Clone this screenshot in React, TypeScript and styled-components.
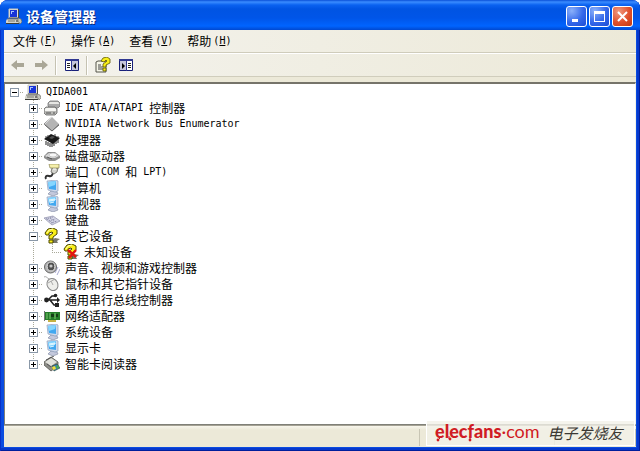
import React, { useState } from 'react';
import styled, { createGlobalStyle, css } from 'styled-components';

const GlobalStyle = createGlobalStyle`
  * { box-sizing: border-box; }
  html { background: #fff; }
  body {
    margin: 0;
    color: #000;
    font: 12px/16px "Noto Sans CJK SC", sans-serif;
  }
  button { margin: 0; padding: 0; border: 0; background: none; color: inherit; font: inherit; }
`;

const Frame = styled.div`
  position: relative;
  display: flex;
  flex-direction: column;
  min-height: 100vh;
  padding: 0 4px 4px;
  overflow: hidden;
  border-radius: 8px 8px 0 0;
  background: #0a4ce0;
  box-shadow: inset 1px 0 #0830c8, inset -1px -1px #001e9c, inset -3px -3px #0638cc;
`;

const TitleBar = styled.header`
  display: flex;
  align-items: center;
  height: 30px;
  margin: 0 -4px;
  padding: 2px 7px 0 6px;
  gap: 4px;
  background: linear-gradient(#0a50d8 0, #3a8cff 2px, #0a62f0 5px, #0054e3 9px, #0055e8 18px, #0064ff 26px, #0048d0 30px);
`;

const Title = styled.h1`
  flex: 1;
  margin: 0;
  color: #fff;
  font: bold 14px/20px "Noto Sans CJK SC", sans-serif;
  text-shadow: 1px 1px #0a2a80;
`;

const Captions = styled.div`
  display: flex;
  gap: 2px;
`;

const CaptionButton = styled.button<{ $close?: boolean }>`
  display: grid;
  place-items: center;
  width: 21px;
  height: 21px;
  border: 1px solid #fff;
  border-radius: 3px;
  background: ${(p) =>
    p.$close
      ? 'radial-gradient(circle at 30% 25%, #f09a80, #e0502c 55%, #c03810)'
      : 'radial-gradient(circle at 25% 20%, #8ab0fa, #3468ea 55%, #1c4cd4)'};
`;

const MenuBar = styled.nav`
  display: flex;
  align-items: center;
  height: 23px;
  padding-left: 9px;
  gap: 14px;
  border-bottom: 1px solid #cfccbb;
  background: linear-gradient(90deg, #f4f3ee, #ece9d8);
`;

const MenuButton = styled.button`
  display: flex;
  gap: 2px;
  line-height: 20px;
`;

const Toolbar = styled.div`
  display: flex;
  align-items: center;
  height: 24px;
  padding-left: 2px;
  border-top: 1px solid #fff;
  border-bottom: 1px solid #d0cdbc;
  background: linear-gradient(90deg, #f4f3ee, #ece9d8);
`;

const ToolButton = styled.button`
  display: grid;
  place-items: center;
  width: 23px;
  height: 20px;
`;

const Divider = styled.span`
  width: 2px;
  height: 19px;
  margin: 0 3px;
  border-left: 1px solid #c5c2b2;
  border-right: 1px solid #fff;
`;

const Client = styled.main`
  display: flex;
  flex: 1;
  flex-direction: column;
  padding-top: 5px;
  background: #ece9d8;
`;

const TreeList = styled.ul`
  flex: 1;
  margin: 0;
  padding: 0;
  list-style: none;
  border: 1px solid #808078;
  border-top: 2px solid #76746a;
  border-right-color: #f4f2e8;
  background: #fff;
`;

const Group = styled.ul`
  margin: 0;
  padding: 0;
  list-style: none;
`;

const Row = styled.div`
  display: flex;
  align-items: center;
  height: 16px;
  white-space: nowrap;
`;

type LineKind = 'none' | 'root' | 'through' | 'end' | 'pass';

const dotsDown = 'repeating-linear-gradient(#a8a898 0 1px, transparent 1px 2px)';
const dotsAcross = 'repeating-linear-gradient(90deg, #a8a898 0 1px, transparent 1px 2px)';

const lineStyles = {
  none: css``,
  root: css`
    background: ${dotsAcross} 9px 8px / 10px 1px no-repeat;
  `,
  through: css`
    background: ${dotsDown} 9px 0 / 1px 100% no-repeat, ${dotsAcross} 9px 8px / 10px 1px no-repeat;
  `,
  end: css`
    background: ${dotsDown} 9px 0 / 1px 8px no-repeat, ${dotsAcross} 9px 8px / 10px 1px no-repeat;
  `,
  pass: css`
    background: ${dotsDown} 9px 0 / 1px 100% no-repeat;
  `,
};

const Cell = styled.span<{ $line: LineKind }>`
  display: grid;
  flex: none;
  place-items: center;
  width: 19px;
  height: 16px;
  ${(p) => lineStyles[p.$line]}
`;

const Expander = styled.button<{ $open: boolean }>`
  width: 9px;
  height: 9px;
  border: 1px solid #8a98a8;
  background:
    linear-gradient(#000, #000) center / 5px 1px no-repeat,
    linear-gradient(#000, #000) center / 1px ${(p) => (p.$open ? '1px' : '5px')} no-repeat,
    #fff;
`;

const Label = styled.span`
  display: flex;
  align-items: center;
  height: 16px;
  padding-left: 5px;
  white-space: pre;
`;

const Latin = styled.span`
  font-family: "DejaVu Sans Mono", monospace;
  font-size: 10px;
`;

const StatusBar = styled.footer`
  display: flex;
  height: 22px;
  padding: 3px 0 1px;
  border-top: 1px solid #a5a294;
  background: linear-gradient(#f8f6ec, #ece9d8 4px);
`;

const StatusPane = styled.span<{ $grow: number }>`
  flex: ${(p) => p.$grow};
  border-right: 1px solid #c8c5b4;
`;

const Watermark = styled.div`
  position: absolute;
  right: 5px;
  bottom: 5px;
  display: flex;
  align-items: center;
  width: 209px;
  height: 26px;
  padding: 0 8px 5px;
  gap: 8px;
  border: 1px solid #fff;
  background: #f3f1e8cc;
`;

const Brand = styled.span`
  position: relative;
  display: flex;
  color: #d01c24;
  font: 18px/20px Lato, sans-serif;
`;

const BrandStrong = styled.b`
  font-weight: 900;
`;

const BrandRoots = styled.svg`
  position: absolute;
  top: 14px;
  left: 0;
`;

const BrandName = styled.span`
  padding-top: 4px;
  color: #3c3934;
  font: italic 15px/18px "Noto Sans CJK SC", sans-serif;
`;

const Svg = styled.svg`
  display: block;
  flex: none;
`;

const TreeIcon = styled.span`
  flex: none;
  padding-left: 1px;
`;

function Art({ children }: { children: React.ReactNode }) {
  return (
    <Svg width="16" height="16" viewBox="0 0 16 16" aria-hidden="true">
      {children}
    </Svg>
  );
}

const question = (
  <>
    <path d="M8 12l3-2 5 1-3 2 1 2H9z" fill="#77776c" />
    <path d="M1 5l3-4 5-1 4 2v4L9 9v2H5V8l4-3-1-1-3 1v2L2 7z" fill="#f8ee18" stroke="#4a4600" strokeWidth="1" />
    <path d="M5 12h4v3H5z" fill="#f8ee18" stroke="#4a4600" />
    <path d="M3 5l2-3 4-1" fill="none" stroke="#fffbb0" />
  </>
);

const monitor = (
  <>
    <path d="M7 11l6 1 1 2-5 2-5-2z" fill="#c3c8dc" stroke="#8990a8" strokeWidth=".7" />
    <path d="M3 1l9-1 2 1v10l-3 1-7-2z" fill="#d0d8ea" stroke="#8da0bf" strokeWidth=".7" />
    <path d="M4 2l8-1v9l-7-1z" fill="#42a8f0" />
    <path d="M4 2l8-1-1 4-6 2z" fill="#85d6ff" />
  </>
);

const icons: Record<string, React.ReactNode> = {
  monitor,
  question,
  pc: (
    <>
      <path d="M3 1h9v9H3z" fill="#e4e4dc" />
      <path d="M3 10V1h9" fill="none" stroke="#c8c8c0" />
      <path d="M12.5 1v9H3" fill="none" stroke="#4c4c48" />
      <path d="M4 2h7v7H4z" fill="#1834d8" />
      <path d="M5 3h3v1H6v2H5z" fill="#a8c4ff" />
      <path d="M1 11h12v4H0v-2z" fill="#d4d4ca" />
      <path d="M0 15.5h13M13.5 11v4" stroke="#3c3c38" />
      <path d="M2 13h7M1 11h11" stroke="#77776e" />
      <path d="M10 13h2" stroke="#202020" />
      <path d="M12 10l3 1 1 3-2 2-2-3z" fill="#c4c4ba" stroke="#68685e" strokeWidth=".6" />
    </>
  ),
  display: (
    <>
      {monitor}
      <path d="M5 4l6-1v1L5 5M6 7l4-1" stroke="#e4f8ff" fill="none" />
    </>
  ),
  ide: (
    <>
      <path d="M4 3l2-2h8l2 2v3l-2 2H6L4 6z" fill="#aaa" stroke="#777" strokeWidth=".8" />
      <path d="M5 3l1-1h8l1 1v1H5z" fill="#e7e7e4" />
      <path d="M0 9l2-2h9l2 2v4l-2 2H2l-2-2z" fill="#b8b8b5" stroke="#666" strokeWidth=".8" />
      <path d="M1 9l1-1h9l1 1v2H1z" fill="#f6f6f3" />
      <path d="M2 13h5M9 13h2" stroke="#555" />
    </>
  ),
  diamond: (
    <>
      <path d="M8 1l7 7-7 7-8-7z" fill="#b4b4b4" stroke="#777" strokeWidth=".8" />
      <path d="M1 8l7-7 7 7" fill="none" stroke="#d9d9d9" />
      <path d="M1 9l7 6 7-6" fill="none" stroke="#686868" />
    </>
  ),
  chip: (
    <>
      <path d="M2 9v4M4 10v4M6 11v4M8 11v4M10 10v4M12 8v4M14 7v4" stroke="#202020" />
      <path d="M0 7l7-5 9 4-7 6z" fill="#181818" />
      <path d="M2 6V4M4 5V3M11 4V2M14 6V4" stroke="#444" />
      <path d="M5 6l3-2 3 1-3 2z" fill="#505050" />
    </>
  ),
  disk: (
    <>
      <path d="M0 8l4-4h7l5 4v2l-5 3H5L0 10z" fill="#8d8d8d" />
      <path d="M1 8l4-3h6l4 3-4 2H5z" fill="#dadada" />
      <ellipse cx="9" cy="7" rx="4" ry="2" fill="#f7f7f7" stroke="#aaa" strokeWidth=".6" />
      <path d="M3 9l5 2" stroke="#555" />
    </>
  ),
  port: (
    <>
      <path d="M9 8c0 3-2 5-4 4-3-1-4 1-3 3" fill="none" stroke="#333" strokeWidth="2" />
      <path d="M8 4h6l-1 4-3 2-3-2z" fill="#d2d2cc" stroke="#64645d" strokeWidth=".8" />
      <path d="M5 0h10v4H6z" fill="#f5efaa" stroke="#8b8554" strokeWidth=".7" />
      <path d="M9 5h3" stroke="#fff" />
    </>
  ),
  keyboard: (
    <>
      <path d="M0 6l9-2 7 5-8 4z" fill="#d4d5e6" stroke="#8b8ca8" strokeWidth=".7" />
      <path d="M3 7l6 4M6 6l6 4M2 7l7-2M5 9l6-2M7 11l6-2" stroke="#8587a4" strokeDasharray="1 1" />
    </>
  ),
  unknown: (
    <>
      {question}
      <path d="M5 6l8 7M13 6l-7 8" stroke="#e31610" strokeWidth="2.4" />
    </>
  ),
  speaker: (
    <>
      <path d="M11 13l3-6M13 15l3-6" stroke="#a9aad2" />
      <circle cx="6.5" cy="7" r="6" fill="#b4b4b4" stroke="#666" />
      <ellipse cx="7" cy="6.5" rx="3.8" ry="4.4" fill="#505050" stroke="#ddd" />
      <circle cx="7" cy="6" r="1.6" fill="#c8c8c8" />
    </>
  ),
  mouse: (
    <>
      <path d="M5 3C2 1 2 0 0 1" fill="none" stroke="#aaa" />
      <ellipse cx="8.5" cy="8.5" rx="5.3" ry="6.3" transform="rotate(-28 8.5 8.5)" fill="#eeeeeb" stroke="#888" />
      <path d="M4 7l7-4M7 5l2 4" stroke="#aaa" fill="none" />
    </>
  ),
  usb: (
    <>
      <path d="M1 8h13M4 8l4-4h3M6 8l4 5h3" fill="none" stroke="#222" strokeWidth="1.5" />
      <path d="M13 5l3 3-3 3z" fill="#222" />
      <circle cx="2.5" cy="8" r="2.4" fill="#222" />
      <circle cx="11.5" cy="3.5" r="1.8" fill="#222" />
      <path d="M11 11h4v4h-4z" fill="#222" />
    </>
  ),
  network: (
    <>
      <path d="M1 4h15v8H1z" fill="#247c29" />
      <path d="M3 5v6M6 5v6M11 5v6" stroke="#7ec873" />
      <path d="M7 6h3v3H7zM12 6h2v3h-2z" fill="#153d17" />
      <path d="M4 12h8v2H4z" fill="#c6b242" />
      <path d="M.5 3v10" stroke="#777" />
    </>
  ),
  reader: (
    <>
      <path d="M0 6l7-5 7 5v4l-7 5-7-6z" fill="#8d8d88" stroke="#55554f" strokeWidth=".8" />
      <path d="M1 6l6-4 6 4-6 4z" fill="#e3e3dd" />
      <path d="M2 4l8-4M3 8l4 3" stroke="#555" />
      <path d="M8 10l5-2 3 4-6 3z" fill="#317cc1" stroke="#284328" strokeWidth=".6" />
      <path d="M8 11l3-1 1 3-3 1z" fill="#f4dd35" />
      <path d="M12 10l2-1 1 3-2 1z" fill="#4bad44" />
    </>
  ),
  back: (
    <path d="M1 8l6-5v3h7v4H7v3z" fill="#aaa797" />
  ),
  forward: (
    <path d="M15 8L9 3v3H2v4h7v3z" fill="#aaa797" />
  ),
  showTree: (
    <>
      <path d="M1.5 2.5h13v11h-13z" fill="#fff" stroke="#182078" />
      <path d="M1 2h14v2H1zM7 4h1v10H7z" fill="#303890" />
      <path d="M8 4h6v9H8z" fill="#c5c6dc" />
      <path d="M3 6.5h3M3 8.5h3M3 10.5h3" stroke="#222" />
      <path d="M12 6v6L9 9z" fill="#000" />
    </>
  ),
  showPane: (
    <>
      <path d="M1.5 2.5h13v11h-13z" fill="#fff" stroke="#182078" />
      <path d="M1 2h14v2H1zM8 4h1v10H8z" fill="#303890" />
      <path d="M2 4h6v9H2z" fill="#c5c6dc" />
      <path d="M10 6.5h3M10 8.5h3M10 10.5h3" stroke="#222" />
      <path d="M4 6v6l3-3z" fill="#000" />
    </>
  ),
  help: (
    <>
      <path d="M1 5l2-1h8v11H1z" fill="#f5f5e9" stroke="#55554b" />
      <path d="M3 8h3M3 10h5M3 12h6" stroke="#444" />
      <path d="M6 4l2-3 4-1 3 2v4l-4 2v2H8V7l4-3-1-1-2 2z" fill="#f8ee18" stroke="#5b5700" strokeWidth=".8" />
      <path d="M8 11h3v3H8z" fill="#f8ee18" stroke="#5b5700" strokeWidth=".8" />
    </>
  ),
};

function MixedText({ text }: { text: string }) {
  return (
    <>
      {text.split(/([\x20-\x7e]+)/).map((part, i) =>
        i % 2 ? <Latin key={i}>{part}</Latin> : part
      )}
    </>
  );
}

interface Device {
  name: string;
  icon: string;
  children?: Device[];
}

const devices: Device[] = [
  { name: 'IDE ATA/ATAPI 控制器', icon: 'ide' },
  { name: 'NVIDIA Network Bus Enumerator', icon: 'diamond' },
  { name: '处理器', icon: 'chip' },
  { name: '磁盘驱动器', icon: 'disk' },
  { name: '端口 (COM 和 LPT)', icon: 'port' },
  { name: '计算机', icon: 'monitor' },
  { name: '监视器', icon: 'display' },
  { name: '键盘', icon: 'keyboard' },
  { name: '其它设备', icon: 'question', children: [{ name: '未知设备', icon: 'unknown' }] },
  { name: '声音、视频和游戏控制器', icon: 'speaker' },
  { name: '鼠标和其它指针设备', icon: 'mouse' },
  { name: '通用串行总线控制器', icon: 'usb' },
  { name: '网络适配器', icon: 'network' },
  { name: '系统设备', icon: 'monitor' },
  { name: '显示卡', icon: 'display' },
  { name: '智能卡阅读器', icon: 'reader' },
];

function DeviceName({ device }: { device: Device }) {
  return (
    <>
      <TreeIcon><Art>{icons[device.icon]}</Art></TreeIcon>
      <Label><MixedText text={device.name} /></Label>
    </>
  );
}

function DeviceNode({ device, last }: { device: Device; last: boolean }) {
  const [open, setOpen] = useState(Boolean(device.children));
  return (
    <li>
      <Row>
        <Cell $line="none" />
        <Cell $line={last ? 'end' : 'through'}>
          <Expander $open={open} aria-expanded={open} aria-label={device.name} onClick={() => setOpen(!open)} />
        </Cell>
        <DeviceName device={device} />
      </Row>
      {open && device.children && (
        <Group>
          {device.children.map((child) => (
            <li key={child.name}>
              <Row>
                <Cell $line="none" />
                <Cell $line={last ? 'none' : 'pass'} />
                <Cell $line="end" />
                <DeviceName device={child} />
              </Row>
            </li>
          ))}
        </Group>
      )}
    </li>
  );
}

const computer: Device = { name: 'QIDA001', icon: 'pc', children: devices };

const menus = [
  ['文件', 'F'],
  ['操作', 'A'],
  ['查看', 'V'],
  ['帮助', 'H'],
];

export default function App() {
  const [open, setOpen] = useState(true);
  return (
    <>
      <GlobalStyle />
      <Frame>
        <TitleBar>
          <Art>{icons.pc}</Art>
          <Title>设备管理器</Title>
          <Captions>
            <CaptionButton aria-label="最小化">
              <Svg width="13" height="13"><path d="M2 9h6v3H2z" fill="#fff" /></Svg>
            </CaptionButton>
            <CaptionButton aria-label="最大化">
              <Svg width="13" height="13"><path d="M1 1h11v11H1zM2 4v7h9V4z" fill="#fff" fillRule="evenodd" /></Svg>
            </CaptionButton>
            <CaptionButton $close aria-label="关闭">
              <Svg width="13" height="13"><path d="M2 2l9 9M11 2l-9 9" stroke="#fff" strokeWidth="2" /></Svg>
            </CaptionButton>
          </Captions>
        </TitleBar>
        <MenuBar>
          {menus.map(([name, key]) => (
            <MenuButton key={key}>
              {name}<Latin>(<u>{key}</u>)</Latin>
            </MenuButton>
          ))}
        </MenuBar>
        <Toolbar>
          <ToolButton disabled aria-label="后退"><Art>{icons.back}</Art></ToolButton>
          <ToolButton disabled aria-label="前进"><Art>{icons.forward}</Art></ToolButton>
          <Divider />
          <ToolButton aria-label="显示控制台树"><Art>{icons.showTree}</Art></ToolButton>
          <Divider />
          <ToolButton aria-label="帮助"><Art>{icons.help}</Art></ToolButton>
          <ToolButton aria-label="显示操作窗格"><Art>{icons.showPane}</Art></ToolButton>
        </Toolbar>
        <Client>
          <TreeList>
            <li>
              <Row>
                <Cell $line="root">
                  <Expander $open={open} aria-expanded={open} aria-label={computer.name} onClick={() => setOpen(!open)} />
                </Cell>
                <DeviceName device={computer} />
              </Row>
              {open && (
                <Group>
                  {devices.map((device, i) => (
                    <DeviceNode key={device.name} device={device} last={i === devices.length - 1} />
                  ))}
                </Group>
              )}
            </li>
          </TreeList>
        </Client>
        <StatusBar>
          <StatusPane $grow={31} />
          <StatusPane $grow={10} />
          <StatusPane $grow={6} />
        </StatusBar>
        <Watermark>
          <Brand>
            <BrandStrong>elecfans</BrandStrong>·com
            <BrandRoots width="40" height="9" aria-hidden="true">
              <path d="M7 1L3 5M14 1v3M35 1v4" stroke="#d01c24" fill="none" />
              <circle cx="3" cy="5" r="1.4" fill="#d01c24" />
              <circle cx="15" cy="4" r="1.4" fill="#d01c24" />
              <circle cx="35" cy="5" r="1.4" fill="#d01c24" />
            </BrandRoots>
          </Brand>
          <BrandName>电子发烧友</BrandName>
        </Watermark>
      </Frame>
    </>
  );
}
